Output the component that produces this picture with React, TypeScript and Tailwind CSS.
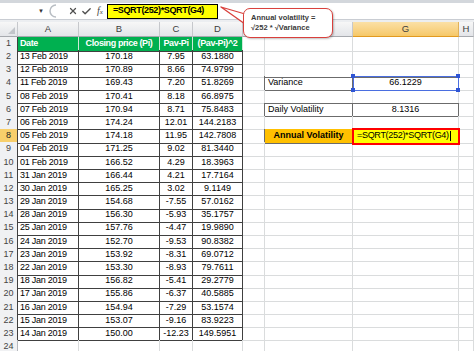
import React from "react";
import { X, Check } from "lucide-react";

const rows: [string, string, string, string][] = [
  ["13 Feb 2019", "170.18", "7.95", "63.1880"],
  ["12 Feb 2019", "170.89", "8.66", "74.9799"],
  ["11 Feb 2019", "169.43", "7.20", "51.8269"],
  ["08 Feb 2019", "170.41", "8.18", "66.8975"],
  ["07 Feb 2019", "170.94", "8.71", "75.8483"],
  ["06 Feb 2019", "174.24", "12.01", "144.2183"],
  ["05 Feb 2019", "174.18", "11.95", "142.7808"],
  ["04 Feb 2019", "171.25", "9.02", "81.3440"],
  ["01 Feb 2019", "166.52", "4.29", "18.3963"],
  ["31 Jan 2019", "166.44", "4.21", "17.7164"],
  ["30 Jan 2019", "165.25", "3.02", "9.1149"],
  ["29 Jan 2019", "154.68", "-7.55", "57.0162"],
  ["28 Jan 2019", "156.30", "-5.93", "35.1757"],
  ["25 Jan 2019", "157.76", "-4.47", "19.9890"],
  ["24 Jan 2019", "152.70", "-9.53", "90.8382"],
  ["23 Jan 2019", "153.92", "-8.31", "69.0712"],
  ["22 Jan 2019", "153.30", "-8.93", "79.7611"],
  ["18 Jan 2019", "156.82", "-5.41", "29.2779"],
  ["17 Jan 2019", "155.86", "-6.37", "40.5885"],
  ["16 Jan 2019", "154.94", "-7.29", "53.1574"],
  ["15 Jan 2019", "153.07", "-9.16", "83.9223"],
  ["14 Jan 2019", "150.00", "-12.23", "149.5951"],
];

const grid = "grid grid-cols-[18px_61px_81px_33px_50px_22px_88px_106px_1fr]";
const gridLine = "border-r border-b border-r-[#dadcdd] border-b-[#dadcdd]";

const FormulaBar = () => (
  <div>
    <div className="h-[3px] bg-[#d3d7dc]" />
    <div className="h-[16px] flex items-center bg-white">
      <div className="w-[46px] h-full flex items-center justify-end pr-[2px]">
        <span className="text-[6px] leading-none text-[#333]">▼</span>
      </div>
      <svg width="10" height="16" viewBox="0 0 10 16" className="ml-[2px]">
        <path d="M8 2 A6 6 0 0 0 8 14" fill="none" stroke="#b9bec4" strokeWidth="1.5" />
      </svg>
      <div className="w-[10px]" />
      <X size={10} strokeWidth={3} className="text-[#505050]" />
      <div className="w-[3px]" />
      <Check size={11} strokeWidth={3} className="text-[#505050]" />
      <div className="w-[5px]" />
      <span className="text-[10px] italic font-['Liberation_Serif',serif] text-[#444] leading-none">
        f<span className="text-[7px]">x</span>
      </span>
      <div className="w-[4px]" />
      <div className="h-[15px] w-[111px] bg-[#ffff00] border-[1.5px] border-black flex items-center pl-[5px] text-[9px] tracking-[-0.35px] font-bold text-black whitespace-nowrap">
        =SQRT(252)*SQRT(G4)
      </div>
    </div>
    <div className="h-[3px] bg-[#eceef1] border-t border-[#c9cdd3]" />
  </div>
);

// E and F letters sit under the callout, so they are left blank
const HeaderRow = () => (
  <div className={`${grid} h-[15px] text-[9.5px] text-[#3c3c3c]`}>
    <div className="relative bg-gradient-to-b from-[#f7f7f7] to-[#e3e5e9] border-r border-b border-r-[#c6c8cc] border-b-[#a6a9ae]">
      <svg width="7" height="7" className="absolute right-[2px] bottom-[2px]">
        <path d="M7 0 L7 7 L0 7 Z" fill="#c2c5ca" />
      </svg>
    </div>
    {["A", "B", "C", "D", "", "", "G", "H"].map((l, i) => (
      <div
        key={i}
        className={`flex items-center justify-center border-r border-b ${
          l === "G"
            ? "bg-gradient-to-b from-[#fbe0a6] to-[#f6c867] border-r-[#e0b15a] border-b-[#e29a20]"
            : "bg-gradient-to-b from-[#f7f7f7] to-[#e3e5e9] border-r-[#c6c8cc] border-b-[#a6a9ae]"
        }`}
      >
        {l}
      </div>
    ))}
  </div>
);

function boxBorder(r: number, c: number) {
  const boxRows = [4, 6, 8];
  if (boxRows.includes(r) && (c === 6 || c === 7)) return "border-r border-b border-r-[#6b6b6b] border-b-[#6b6b6b]";
  if (boxRows.includes(r) && c === 5) return "border-r border-b border-r-[#6b6b6b] border-b-[#dadcdd]";
  if (boxRows.includes(r + 1) && (c === 6 || c === 7)) return "border-r border-b border-r-[#dadcdd] border-b-[#6b6b6b]";
  return gridLine;
}

const SheetRow = ({ r }: { r: number }) => {
  const h = r === 1 ? "h-[13px]" : r === 24 ? "h-[11px]" : "h-[13.2px]";
  const inTable = r >= 1 && r <= 23;
  const d = r >= 2 && r <= 23 ? rows[r - 2] : null;

  const rowNum = (
    <div
      className={`flex items-center justify-center text-[9px] border-r border-b ${
        r === 8 ? "bg-[#f8cf6b] text-[#222] border-b-[#e3a93a]" : "bg-[#f0f1f3] text-[#444] border-b-[#d2d4d8]"
      } ${inTable ? "border-r-[#404040]" : "border-r-[#b6b9be]"}`}
    >
      {r}
    </div>
  );

  let tableCells: React.ReactNode[];
  if (r === 1) {
    tableCells = ["Date", "Closing price (Pi)", "Pav-Pi", "(Pav-Pi)^2"].map((t, i) => (
      <div
        key={i}
        className={`flex items-center ${i === 0 ? "justify-start pl-[2px]" : "justify-center"} bg-[#00b050] text-white font-bold text-[9px] tracking-[-0.4px] whitespace-nowrap border-r border-b border-r-[#cfe9d8] border-b-[#404040]`}
      >
        {t}
      </div>
    ));
  } else if (d) {
    tableCells = d.map((t, i) => (
      <div
        key={i}
        className={`flex items-center ${i === 0 ? "justify-start pl-[2px] tracking-[-0.25px]" : "justify-center"} text-[9px] text-black whitespace-nowrap border-r border-b border-r-[#404040] border-b-[#404040]`}
      >
        {t}
      </div>
    ));
  } else {
    tableCells = [1, 2, 3, 4].map((i) => <div key={i} className={gridLine} />);
  }

  const rightCell = (c: number) => {
    const base = `${boxBorder(r, c)} flex items-center text-[9px] text-black whitespace-nowrap`;
    if (r === 4 && c === 6) return <div key={c} className={`${base} pl-[3px]`}>Variance</div>;
    if (r === 4 && c === 7)
      return (
        <div key={c} className={`${base} relative justify-center outline outline-1 -outline-offset-1 outline-[#4a6ee0]`}>
          66.1229
          <span className="absolute -left-[2px] -top-[2px] w-[4px] h-[4px] bg-[#2f55d4]" />
          <span className="absolute -right-[2px] -top-[2px] w-[4px] h-[4px] bg-[#2f55d4]" />
          <span className="absolute -left-[2px] -bottom-[2px] w-[4px] h-[4px] bg-[#2f55d4]" />
          <span className="absolute -right-[2px] -bottom-[2px] w-[4px] h-[4px] bg-[#2f55d4]" />
        </div>
      );
    if (r === 6 && c === 6) return <div key={c} className={`${base} pl-[3px]`}>Daily Volatility</div>;
    if (r === 6 && c === 7) return <div key={c} className={`${base} justify-center`}>8.1316</div>;
    if (r === 8 && c === 6)
      return (
        <div key={c} className={`${base} justify-center bg-[#ffc000] font-bold text-[9.5px] text-[#262626]`}>
          Annual Volatility
        </div>
      );
    if (r === 8 && c === 7)
      return (
        <div
          key={c}
          className={`${base} relative z-10 bg-[#ffff00] pl-[4px] tracking-[-0.3px] outline-2 outline-[#ff0000] -outline-offset-1`}
        >
          =SQRT(252)*SQRT(G4)
          <span className="w-[1px] h-[10px] bg-black ml-[1px]" />
        </div>
      );
    return <div key={c} className={base} />;
  };

  return (
    <div className={`${grid} ${h}`}>
      {rowNum}
      {tableCells}
      {[5, 6, 7, 8].map((c) => rightCell(c))}
    </div>
  );
};

const Callout = () => (
  <>
    <svg width="30" height="24" className="absolute left-[219px] top-[4px] z-20" viewBox="0 0 30 24">
      <path d="M2 3 L26 10 L26 20 Z" fill="white" stroke="#d9403c" strokeWidth="1.3" strokeLinejoin="round" />
    </svg>
    <div className="absolute left-[243px] top-[8px] w-[90px] h-[30px] z-20 bg-white border-[1.5px] border-[#d9403c] rounded-[7px] shadow-[1px_1px_2px_rgba(0,0,0,0.25)] flex flex-col justify-center pl-[7px] text-[7.5px] leading-[10px] font-bold text-[#3a3a3a] whitespace-nowrap">
      <span>Annual volatility =</span>
      <span>√252 * √Variance</span>
    </div>
    <div className="absolute left-[244px] top-[14px] w-[3px] h-[10px] bg-white z-30" />
  </>
);

export default function App() {
  return (
    <div className="relative w-[474px] h-[351px] overflow-hidden bg-white font-['Liberation_Sans',Arial,sans-serif]">
      <FormulaBar />
      <HeaderRow />
      {Array.from({ length: 24 }, (_, i) => (
        <SheetRow key={i} r={i + 1} />
      ))}
      <Callout />
    </div>
  );
}
